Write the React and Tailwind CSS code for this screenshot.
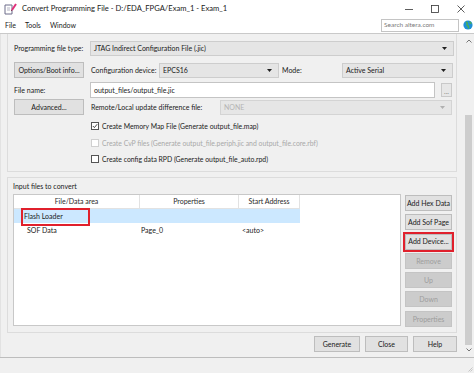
import React from 'react';

const font = { fontFamily: 'Lato, "Noto Sans", sans-serif' };

function Caret({ light }) {
  return (
    <svg width="5" height="3" viewBox="0 0 5 3" className="shrink-0">
      <path d="M0 0 L5 0 L2.5 3 Z" fill={light ? '#b0b0b0' : '#202020'} />
    </svg>
  );
}

function Select({ value, width, disabled }) {
  return (
    <div
      className={`h-[15px] flex items-center justify-between pl-[3px] pr-[6px] border ${
        disabled ? 'bg-[#e6e6e6] border-[#d4d4d4] text-[#b4b4b4]' : 'bg-[#e5e5e5] border-[#cdcdcd] text-[#1a1a1a]'
      }`}
      style={{ width }}
    >
      <span>{value}</span>
      <Caret light={disabled} />
    </div>
  );
}

function Btn({ children, w, disabled, className = '' }) {
  return (
    <div
      className={`h-[16px] flex items-center justify-center border ${
        disabled ? 'bg-[#cccccc] border-[#c4c4c4] text-[#9d9d9d]' : 'bg-[#e1e1e1] border-[#bdbdbd] text-[#1a1a1a]'
      } ${className}`}
      style={{ width: w }}
    >
      {children}
    </div>
  );
}

function Check({ checked, disabled, label }) {
  return (
    <div className={`h-[16.5px] flex items-center gap-[3px] ${disabled ? 'text-[#a8a8a8]' : 'text-[#1a1a1a]'}`}>
      <div
        className={`w-[8px] h-[8px] border flex items-center justify-center bg-white ${
          disabled ? 'border-[#d0d0d0]' : 'border-[#555555]'
        }`}
      >
        {checked && (
          <svg width="6" height="6" viewBox="0 0 6 6">
            <path d="M0.8 3 L2.4 4.6 L5.2 1.2" stroke="#333" strokeWidth="0.9" fill="none" />
          </svg>
        )}
      </div>
      <span>{label}</span>
    </div>
  );
}

export default function App() {
  return (
    <div className="w-[474px] h-[373px] bg-[#f0f0f0] flex flex-col overflow-hidden text-[7px] text-[#1a1a1a]" style={font}>
      {/* title bar */}
      <div className="h-[17px] bg-white flex items-center pl-[4px]">
        <svg width="13" height="12" viewBox="0 0 13 12" className="shrink-0">
          <path d="M1 2 H8 V11 H1 Z" fill="#ffffff" stroke="#6d6d8a" strokeWidth="1" />
          <path d="M3 5 H6 M3 7 H6" stroke="#9090a8" strokeWidth="0.7" />
          <path d="M8 7 L12 1" stroke="#e0307a" strokeWidth="2" />
          <path d="M7.2 8 L8 7" stroke="#7a3050" strokeWidth="1" />
        </svg>
        <span className="ml-[5px] text-[7.6px] text-[#202020]">Convert Programming File - D:/EDA_FPGA/Exam_1 - Exam_1</span>
        <div className="ml-auto flex items-center h-full">
          <div className="w-[26px] flex justify-center">
            <svg width="8" height="8" viewBox="0 0 8 8"><path d="M0 4.5 H8" stroke="#333" strokeWidth="0.8" /></svg>
          </div>
          <div className="w-[26px] flex justify-center">
            <svg width="8" height="8" viewBox="0 0 8 8"><rect x="0.5" y="0.5" width="7" height="7" fill="none" stroke="#333" strokeWidth="0.8" /></svg>
          </div>
          <div className="w-[26px] flex justify-center">
            <svg width="8" height="8" viewBox="0 0 8 8"><path d="M0.5 0.5 L7.5 7.5 M7.5 0.5 L0.5 7.5" stroke="#333" strokeWidth="0.8" /></svg>
          </div>
        </div>
      </div>

      {/* menu bar */}
      <div className="h-[17px] bg-white flex items-center border-b border-[#c9c9c9]">
        <div className="flex gap-[9px] pl-[5px] text-[7px] text-[#1a1a1a]">
          <span>File</span>
          <span>Tools</span>
          <span>Window</span>
        </div>
        <div className="ml-auto flex items-center gap-[4px] pr-[1px]">
          <div className="w-[78px] h-[13px] border border-[#c4c4c4] bg-white flex items-center pl-[2px] text-[6.5px] text-[#7a7a7a]">
            Search altera.com
          </div>
          <svg width="10" height="10" viewBox="0 0 10 10">
            <circle cx="5" cy="5" r="4.6" fill="#1e8fd6" />
            <path d="M3 2 Q5 3 4 5 Q6 6 5.5 8.5 M6.5 1.5 Q7 3 8.5 3.5" stroke="#4caf50" strokeWidth="1.4" fill="none" />
          </svg>
        </div>
      </div>

      {/* main */}
      <div className="flex-1 flex min-h-0">
        <div className="flex-1 pl-[6px] pr-[6px] flex flex-col overflow-hidden border-l border-[#e2e2e2]">
          {/* output group (title scrolled off) */}
          <div className="border border-t-0 border-[#dcdcdc] h-[138px] flex flex-col pl-[6px] pt-[6px]">
            <div className="flex items-center h-[15px] mt-[1px]">
              <span className="w-[76px]">Programming file type:</span>
              <Select value="JTAG Indirect Configuration File (.jic)" width={364} />
            </div>
            <div className="flex items-center h-[16px] mt-[6px]">
              <Btn w={70}>Options/Boot info...</Btn>
              <span className="ml-[7px] w-[68px]">Configuration device:</span>
              <Select value="EPCS16" width={120} />
              <span className="ml-[3px] w-[60px]">Mode:</span>
              <Select value="Active Serial" width={111} />
            </div>
            <div className="flex items-center h-[16px] mt-[4px]">
              <span className="w-[76px]">File name:</span>
              <div className="w-[345px] h-[16px] bg-white border border-[#c4c4c4] flex items-center pl-[3px]">output_files/output_file.jic</div>
              <div className="ml-[6px] w-[11px] h-[14px] border border-[#c9c9c9] bg-[#e7e7e7] flex items-end justify-center text-[#888] leading-[9px]">...</div>
            </div>
            <div className="flex items-center h-[16px] mt-[1px]">
              <Btn w={70}>Advanced...</Btn>
              <span className="ml-[7px] w-[129px]">Remote/Local update difference file:</span>
              <Select value="NONE" width={232} disabled />
            </div>
            <div className="pl-[77px] mt-[3px] flex flex-col text-[6.85px]">
              <Check checked label="Create Memory Map File (Generate output_file.map)" />
              <Check disabled label="Create CvP files (Generate output_file.periph.jic and output_file.core.rbf)" />
              <Check label="Create config data RPD (Generate output_file_auto.rpd)" />
            </div>
          </div>

          {/* input group */}
          <div className="mt-[5px] border border-[#dcdcdc] h-[156px] flex flex-col pl-[5px] pt-[2px]">
            <span className="h-[12px] leading-[12px]">Input files to convert</span>
            <div className="flex mt-[2px]">
              <div className="relative w-[388px] h-[132px] bg-white border border-[#c8c8c8]">
                <div className="flex h-[14px] text-[#2a2a2a]">
                  <div className="w-[126px] flex items-center justify-center border-r border-b border-[#e2e2e2]">File/Data area</div>
                  <div className="w-[99px] flex items-center justify-center border-r border-b border-[#e2e2e2]">Properties</div>
                  <div className="w-[61px] flex items-center justify-center border-r border-b border-[#e2e2e2]">Start Address</div>
                </div>
                <div className="flex h-[14px] w-[286px] bg-[#cce8ff] items-center">
                  <span className="pl-[10px]">Flash Loader</span>
                </div>
                <div className="flex h-[15px] items-center">
                  <span className="w-[126px] pl-[13px]">SOF Data</span>
                  <span className="w-[99px] pl-[1px]">Page_0</span>
                  <span className="pl-[3px]">&lt;auto&gt;</span>
                </div>
                <div className="absolute left-[7px] top-[13px] w-[69px] h-[18px] border-2 border-[#e0202c]" />
              </div>
              <div className="ml-[4px] mt-[1px] flex flex-col gap-[3.3px]">
                <Btn w={47}>Add Hex Data</Btn>
                <Btn w={47}>Add Sof Page</Btn>
                <div className="relative">
                  <Btn w={47}>Add Device...</Btn>
                  <div className="absolute -left-[2px] -top-[2px] w-[51px] h-[20px] border-2 border-[#e0202c]" />
                </div>
                <Btn w={47} disabled>Remove</Btn>
                <Btn w={47} disabled>Up</Btn>
                <Btn w={47} disabled>Down</Btn>
                <Btn w={47} disabled>Properties</Btn>
              </div>
            </div>
          </div>

          {/* bottom buttons */}
          <div className="flex justify-end gap-[5px] mt-[3px]">
            <Btn w={46} className="h-[15px]">Generate</Btn>
            <Btn w={43} className="h-[15px]">Close</Btn>
            <Btn w={44} className="h-[15px]">Help</Btn>
          </div>
        </div>

        {/* scrollbar */}
        <div className="w-[11px] flex flex-col items-center bg-[#f0f0f0]">
          <svg width="6" height="4" viewBox="0 0 6 4" className="mt-[5px]">
            <path d="M0.5 3.5 L3 1 L5.5 3.5" stroke="#555" strokeWidth="0.8" fill="none" />
          </svg>
          <div className="mt-[72px] w-[7px] h-[230px] bg-[#cdcdcd]" />
          <svg width="6" height="4" viewBox="0 0 6 4" className="mt-[3px]">
            <path d="M0.5 0.5 L3 3 L5.5 0.5" stroke="#555" strokeWidth="0.8" fill="none" />
          </svg>
        </div>
      </div>

      {/* status bar */}
      <div className="h-[16px] border-t border-[#bdbdbd] bg-[#f0f0f0] flex justify-end items-end">
        <svg width="5" height="5" viewBox="0 0 5 5" className="mr-[1px] mb-[1px]">
          <path d="M4.5 0.5 L0.5 4.5 M4.5 2.5 L2.5 4.5" stroke="#aaa" strokeWidth="0.6" />
        </svg>
      </div>
    </div>
  );
}
